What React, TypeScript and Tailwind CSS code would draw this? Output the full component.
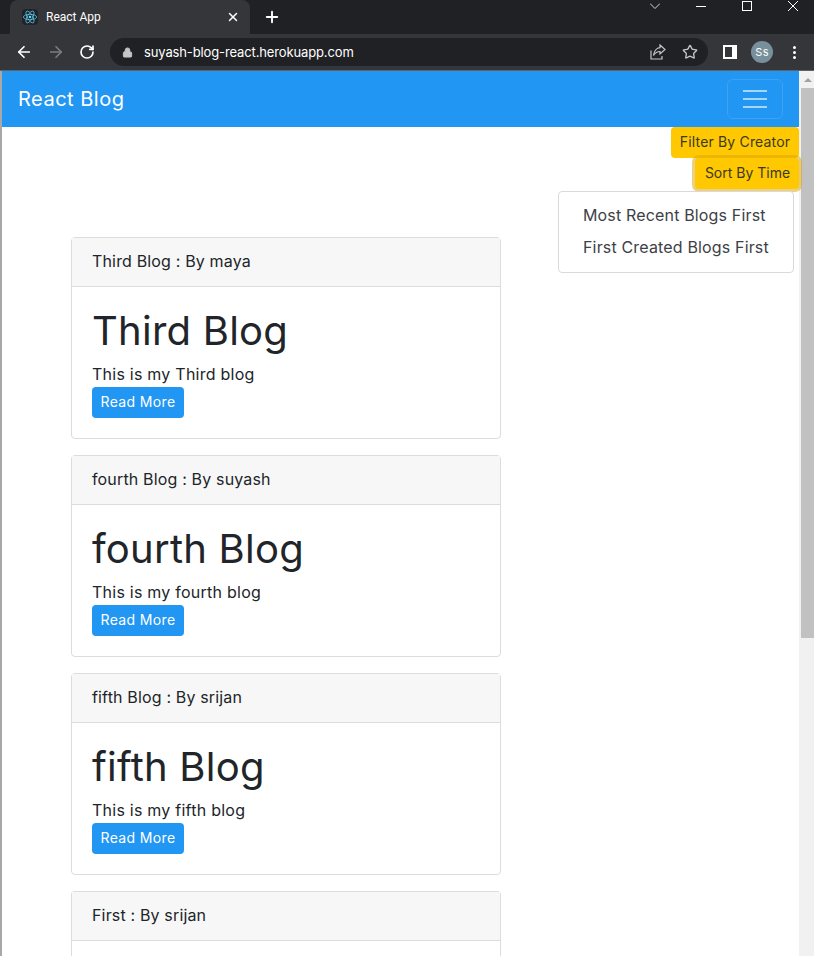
import { ArrowLeft, ArrowRight, RotateCw, Lock, Star, X, Plus } from "lucide-react";

const blogs = [
  { title: "Third Blog", author: "maya", text: "This is my Third blog" },
  { title: "fourth Blog", author: "suyash", text: "This is my fourth blog" },
  { title: "fifth Blog", author: "srijan", text: "This is my fifth blog" },
];

function ReactLogo() {
  return (
    <svg viewBox="-12 -12 24 24" className="size-4 rounded-sm bg-[#20232a]" fill="none" stroke="#61dafb" strokeWidth="1">
      <circle r="2" fill="#61dafb" stroke="none" />
      <ellipse rx="10" ry="4" />
      <ellipse rx="10" ry="4" transform="rotate(60)" />
      <ellipse rx="10" ry="4" transform="rotate(120)" />
    </svg>
  );
}

function ShareIcon() {
  return (
    <svg viewBox="0 0 16 16" className="size-4" fill="none" stroke="#c4c7c5" strokeWidth="1.2">
      <path d="M1 6.5V15h11v-3" />
      <path d="M10 1l5 4.500L10 10V7.500C7 7.500 5 9 3.500 11.500 4 7.500 6.500 4 10 3.700z" />
    </svg>
  );
}

// windows caption buttons, thin 10px glyphs
function WindowControls() {
  return (
    <div className="ml-auto flex items-start pt-[1px]">
      <svg viewBox="0 0 10 10" className="mr-[36px] size-[10px]" fill="none" stroke="#d5d5d5" strokeWidth="1">
        <path d="M0 2.500l5 5 5-5" />
      </svg>
      <svg viewBox="0 0 10 10" className="mr-[36px] size-[10px]" fill="none" stroke="#fff" strokeWidth="1">
        <path d="M0 5.500h10" />
      </svg>
      <svg viewBox="0 0 10 10" className="mr-[36px] size-[10px]" fill="none" stroke="#fff" strokeWidth="1">
        <rect x="0.500" y="0.500" width="9" height="9" />
      </svg>
      <svg viewBox="0 0 10 10" className="mr-[16px] size-[10px]" fill="none" stroke="#fff" strokeWidth="1">
        <path d="M0 0l10 10M10 0L0 10" />
      </svg>
    </div>
  );
}

function BrowserChrome() {
  return (
    <div className="h-[71px] shrink-0 border-b border-[#5f6368] bg-[#35363a]">
      <div className="flex h-[34px] items-start bg-[#202124] pl-[10px]">
        <div className="flex h-[34px] w-[240px] items-center rounded-t-lg bg-[#35363a] pl-3 pr-[10px]">
          <ReactLogo />
          <span className="ml-2 font-['Roboto',sans-serif] text-xs tracking-normal text-white">React App</span>
          <X className="ml-auto size-[14px] text-white" strokeWidth={2.5} />
        </div>
        <Plus className="ml-[13px] mt-[8px] size-[18px] text-white" strokeWidth={2.5} />
        <WindowControls />
      </div>
      <div className="flex h-9 items-center">
        <ArrowLeft className="ml-[15px] size-[18px] text-white" strokeWidth={2.25} />
        <ArrowRight className="ml-[14px] size-[18px] text-[#7d7e80]" strokeWidth={2.25} />
        <RotateCw className="ml-[14px] size-4 text-white" strokeWidth={2.5} />
        <div className="ml-[15px] flex h-7 w-[598px] items-center rounded-full bg-[#202124] pl-3 pr-[10px]">
          <Lock className="size-[11px] text-[#c4c7c5]" fill="#c4c7c5" />
          <span className="ml-[11px] pt-[1px] text-[13px] tracking-[-0.01em] text-white">suyash-blog-react.herokuapp.com</span>
          <div className="ml-auto flex items-center gap-4">
            <ShareIcon />
            <Star className="size-4 text-[#c4c7c5]" strokeWidth={2} />
          </div>
        </div>
        <div className="ml-[15px] flex h-[14px] w-[14px] justify-start bg-white pl-[2px] pt-[2px]">
          <div className="h-[10px] w-[7px] bg-[#35363a]" />
        </div>
        <div className="ml-[14px] flex size-[22px] items-center justify-center rounded-full bg-[#78909c] text-[11px] text-white">Ss</div>
        <div className="ml-[20px] flex flex-col gap-[2px]">
          <span className="size-[3px] rounded-full bg-white" />
          <span className="size-[3px] rounded-full bg-white" />
          <span className="size-[3px] rounded-full bg-white" />
        </div>
      </div>
    </div>
  );
}

function BlogCard({ title, author, text }: { title: string; author: string; text: string }) {
  return (
    <div className="w-[430px] shrink-0 rounded border border-[#dcdcdc] bg-white">
      <div className="flex h-[49px] items-center border-b border-[#dcdcdc] bg-[#f7f7f7] px-5 pb-[2px] text-[16px] tracking-[0.01em]">
        {title} : By {author}
      </div>
      <div className="px-5 pb-5 pt-[20px]">
        <h1 className="text-[40px] leading-[48px]">{title}</h1>
        <p className="mt-[7px] text-[16px] leading-6">{text}</p>
        <button className="mt-[1px] block h-[31px] w-[92px] rounded bg-[#2196f3] pb-[2px] text-sm tracking-[0.025em] text-white">Read More</button>
      </div>
    </div>
  );
}

export default function App() {
  return (
    <div className="flex h-[956px] flex-col overflow-hidden bg-white font-['Inter',sans-serif] tracking-[0.015em] text-[#212529]">
      <BrowserChrome />
      <div className="flex min-h-0 flex-1 border-l-2 border-[#a8a8a8]">
        <div className="relative min-w-0 flex-1">
          <nav className="flex h-14 items-center justify-between bg-[#2196f3] pl-4 pr-4">
            <span className="text-xl tracking-[0.025em] text-white">React Blog</span>
            <div className="flex h-10 w-14 flex-col items-center justify-center gap-[6px] rounded-md border border-[#3ba2f5]">
              <span className="h-[2px] w-6 bg-[#a6d5fa]" />
              <span className="h-[2px] w-6 bg-[#a6d5fa]" />
              <span className="h-[2px] w-6 bg-[#a6d5fa]" />
            </div>
          </nav>
          <div className="flex flex-col items-end">
            <button className="h-[31px] w-[128px] rounded bg-[#ffc800] pb-[2px] text-sm tracking-[0.012em] text-[#3a3a20]">Filter By Creator</button>
            <button className="h-[31px] w-[104px] rounded bg-[#ffc800] pb-[2px] pl-[1px] text-sm tracking-normal text-[#3a3a20] shadow-[0_0_0_3px_rgba(217,164,6,0.5)]">Sort By Time</button>
          </div>
          <div className="absolute left-[556px] top-[120px] flex h-[82px] w-[236px] flex-col justify-center gap-2 rounded border border-[#d9d9d9] bg-white pb-[2px] pl-6 tracking-[0.01em] text-[#3d4146]">
            <span className="text-[16px] leading-6">Most Recent Blogs First</span>
            <span className="text-[16px] leading-6">First Created Blogs First</span>
          </div>
          <div className="ml-[69px] mt-[48px] flex flex-col gap-4">
            {blogs.map((b) => (
              <BlogCard key={b.title} {...b} />
            ))}
            <div className="h-[66px] w-[430px] rounded-t border-x border-t border-[#dcdcdc]">
              <div className="flex h-[49px] items-center border-b border-[#dcdcdc] bg-[#f7f7f7] px-5 pb-[2px] text-[16px] tracking-[0.01em]">First : By srijan</div>
            </div>
          </div>
        </div>
        <div className="flex w-[15px] shrink-0 flex-col bg-[#f1f1f1] pl-[2px]">
          <div className="flex h-[17px] items-center justify-center">
            <div className="h-0 w-0 border-x-4 border-b-4 border-x-transparent border-b-[#a3a3a3]" />
          </div>
          <div className="h-[550px] bg-[#c1c1c1]" />
        </div>
      </div>
    </div>
  );
}
